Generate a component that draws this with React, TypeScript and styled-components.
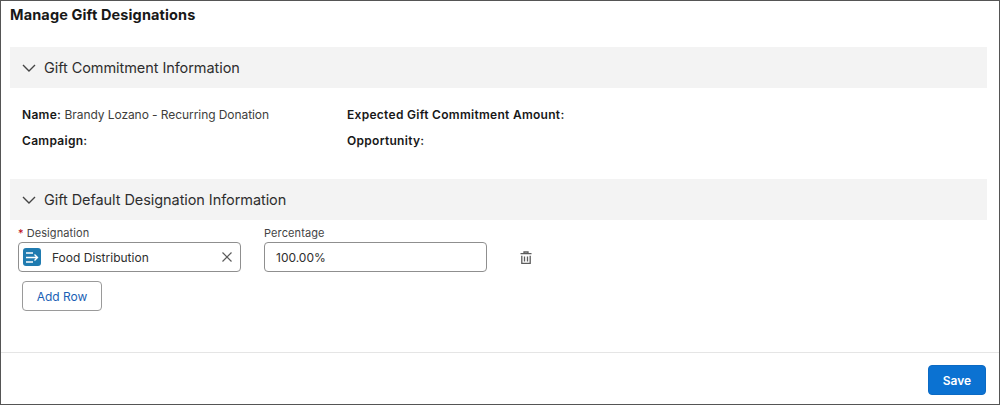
import { createGlobalStyle } from "styled-components";
import styled from "styled-components";

const GlobalStyle = createGlobalStyle`
    html, body {
        margin: 0;
        padding: 0;
        background: #ffffff;
    }
    body {
        font-family: Inter, "Liberation Sans", sans-serif;
        color: #181818;
    }
`;

export default function App() {
    return (
        <>
            <GlobalStyle />
            <Frame>
                <Content>
                    <Title>Manage Gift Designations</Title>
                    <SectionHeader $first>
                        <Chevron />
                        Gift Commitment Information
                    </SectionHeader>
                    <InfoGrid>
                        <span>
                            <b>Name:</b> Brandy Lozano - Recurring Donation
                        </span>
                        <span>
                            <b>Expected Gift Commitment Amount:</b>
                        </span>
                        <span>
                            <b>Campaign:</b>
                        </span>
                        <span>
                            <b>Opportunity:</b>
                        </span>
                    </InfoGrid>
                    <SectionHeader>
                        <Chevron />
                        Gift Default Designation Information
                    </SectionHeader>
                    <FormRow>
                        <Field>
                            <Label>
                                <Required>*</Required>Designation
                            </Label>
                            <InputBox>
                                <RecordIcon>
                                    <svg width="13" height="11" viewBox="0 0 13 11" fill="none" stroke="#fff" strokeWidth="1.4">
                                        <path d="M0 1h7M0 5.500h11M0 10h7M8.500 2.500l3 3-3 3" />
                                    </svg>
                                </RecordIcon>
                                <InputText>Food Distribution</InputText>
                                <svg width="12" height="12" viewBox="0 0 12 12" stroke="#5c5c5c" strokeWidth="1.2">
                                    <path d="M1.500 1.500l9 9M10.500 1.500l-9 9" />
                                </svg>
                            </InputBox>
                        </Field>
                        <Field>
                            <Label>Percentage</Label>
                            <InputBox>
                                <PlainValue>100.00%</PlainValue>
                            </InputBox>
                        </Field>
                        <TrashButton>
                            <svg width="12" height="13" viewBox="0 0 12 13" fill="none" stroke="#5c5c5c" strokeWidth="1.3">
                                <path d="M.5 2.700h11M4 2.500V1h4v1.500M1.800 4.800v7.500h8.400V4.800M4.500 5.500v5M7.500 5.500v5" />
                            </svg>
                        </TrashButton>
                    </FormRow>
                    <AddRow>Add Row</AddRow>
                </Content>
                <Footer>
                    <SaveButton>Save</SaveButton>
                </Footer>
            </Frame>
        </>
    );
}

function Chevron() {
    return (
        <ChevronSvg width="14" height="8" viewBox="0 0 14 8" fill="none" stroke="#444" strokeWidth="1.4">
            <path d="M1 1l6 6 6-6" />
        </ChevronSvg>
    );
}

const Frame = styled.div`
    box-sizing: border-box;
    width: 1000px;
    height: 405px;
    border: 1px solid #555555;
    display: flex;
    flex-direction: column;
`;

const Content = styled.div`
    flex: 1;
    padding: 0 12px 0 9px;
`;

const Title = styled.h2`
    margin: 0;
    padding-top: 5px;
    font-size: 14.5px;
    line-height: 17px;
    letter-spacing: 0.13px;
    font-weight: 700;
    color: #181818;
`;

const SectionHeader = styled.div<{ $first?: boolean }>`
    display: flex;
    align-items: center;
    height: 41px;
    margin-top: ${(p) => (p.$first ? "24px" : "0")};
    padding-left: 12px;
    background: #f3f3f3;
    font-size: 14.5px;
    letter-spacing: -0.07px;
    color: #2e2e2e;
`;

const ChevronSvg = styled.svg`
    margin-right: 8px;
`;

const InfoGrid = styled.div`
    display: grid;
    grid-template-columns: 325px 1fr;
    grid-auto-rows: 26px;
    align-items: center;
    padding: 13px 0 26px 12px;
    font-size: 12px;
    color: #3e3e3c;
    letter-spacing: -0.07px;

    b {
        font-weight: 600;
        color: #181818;
        letter-spacing: 0.29px;
    }
`;

const FormRow = styled.div`
    display: flex;
    align-items: flex-end;
    gap: 23px;
    padding: 6px 0 0 8px;
`;

const Field = styled.div`
    width: 223px;
`;

const Label = styled.div`
    font-size: 11px;
    line-height: 15px;
    margin-bottom: 1px;
    color: #444444;
    letter-spacing: 0.1px;
`;

const Required = styled.span`
    color: #ba0517;
    margin-right: 3px;
`;

const InputBox = styled.div`
    box-sizing: border-box;
    height: 30px;
    display: flex;
    align-items: center;
    padding: 0 7px 0 4px;
    background: #fff;
    border: 1px solid #8f8f8f;
    border-radius: 4px;
`;

const RecordIcon = styled.span`
    display: flex;
    align-items: center;
    justify-content: center;
    width: 18px;
    height: 18px;
    border-radius: 3px;
    background: #1f7bb0;
    flex: none;
`;

const InputText = styled.span`
    flex: 1;
    margin-left: 11px;
    font-size: 12px;
    color: #2e2e2e;
`;

const PlainValue = styled.span`
    margin-left: 7px;
    font-size: 12px;
    color: #2e2e2e;
`;

const TrashButton = styled.div`
    display: flex;
    align-items: center;
    height: 30px;
    margin-left: 10px;
`;

const AddRow = styled.button`
    display: block;
    box-sizing: border-box;
    width: 80px;
    height: 30px;
    margin: 9px 0 0 12px;
    padding: 0;
    background: #fff;
    border: 1px solid #9a9a9a;
    border-radius: 4px;
    font-family: inherit;
    font-size: 12px;
    color: #1b5fb5;
`;

const Footer = styled.div`
    height: 52px;
    box-sizing: border-box;
    display: flex;
    justify-content: flex-end;
    align-items: flex-start;
    padding: 12px 13px 0 0;
    border-top: 1px solid #e5e5e5;
`;

const SaveButton = styled.button`
    width: 58px;
    height: 30px;
    padding: 0;
    background: #0b72d2;
    border: 1px solid #0b6ac4;
    border-radius: 4px;
    font-family: inherit;
    font-size: 12px;
    font-weight: 600;
    color: #fff;
`;
